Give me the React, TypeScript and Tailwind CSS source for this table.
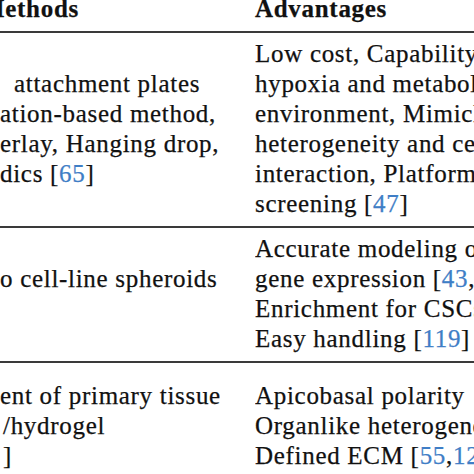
import type { ReactNode } from "react";

type Line = { text: ReactNode; className?: string };

function Ref({ children }: { children: ReactNode }) {
  return <span className="text-[#3f7ec6] [-webkit-text-stroke:0.25px_#3f7ec6]">{children}</span>;
}

function Rule() {
  return <div className="h-[2px] w-full bg-[#3a3a3a]" />;
}

function Row({
  left,
  right,
  className,
  leftClassName,
}: {
  left: Line[];
  right: Line[];
  className: string;
  leftClassName: string;
}) {
  return (
    <div className={`flex ${className}`}>
      <div className={`w-[255px] shrink-0 overflow-hidden whitespace-nowrap ${leftClassName}`}>
        {left.map((l, i) => (
          <div key={i} className={l.className}>
            {l.text}
          </div>
        ))}
      </div>
      <div className="min-w-0 flex-1 overflow-hidden whitespace-nowrap">
        {right.map((l, i) => (
          <div key={i}>{l.text}</div>
        ))}
      </div>
    </div>
  );
}

export default function App() {
  return (
    <div className="h-[474px] w-[474px] overflow-hidden bg-white font-['Liberation_Serif','Times_New_Roman',serif] text-[25px] leading-[30px] tracking-[0.7px] text-[#111111] [-webkit-text-stroke:0.25px_#111111]">
      <div className="mt-[-6px] flex pb-[7px] font-bold">
        <div className="w-[255px] shrink-0 overflow-hidden whitespace-nowrap">
          <span className="ml-[-19px] inline-block">Methods</span>
        </div>
        <div className="whitespace-nowrap">Advantages</div>
      </div>
      <Rule />

      <Row
        className="pt-[6px] pb-[7px]"
        leftClassName="pt-[30px]"
        left={[
          { text: "attachment plates", className: "pl-[14px]" },
          { text: "ation-based method," },
          { text: "erlay, Hanging drop," },
          {
            text: (
              <>
                dics [<Ref>65</Ref>]
              </>
            ),
          },
        ]}
        right={[
          { text: "Low cost, Capability of" },
          { text: "hypoxia and metabolic" },
          { text: "environment, Mimicking" },
          { text: "heterogeneity and cell-cell" },
          { text: "interaction, Platform for" },
          {
            text: (
              <>
                screening [<Ref>47</Ref>]
              </>
            ),
          },
        ]}
      />
      <Rule />

      <Row
        className="pt-[6px] pb-[7px]"
        leftClassName="pt-[30px]"
        left={[{ text: "o cell-line spheroids" }]}
        right={[
          { text: "Accurate modeling of" },
          {
            text: (
              <>
                gene expression [<Ref>43</Ref>,<Ref>118</Ref>]
              </>
            ),
          },
          { text: "Enrichment for CSCs" },
          {
            text: (
              <>
                Easy handling [<Ref>119</Ref>]
              </>
            ),
          },
        ]}
      />
      <Rule />

      <Row
        className="pt-[18px]"
        leftClassName=""
        left={[
          { text: "ent of primary tissue" },
          { text: "/hydrogel", className: "pl-[3px]" },
          { text: "]", className: "pl-[3px]" },
        ]}
        right={[
          { text: "Apicobasal polarity" },
          { text: "Organlike heterogeneity" },
          {
            text: (
              <>
                Defined ECM [<Ref>55</Ref>,<Ref>120</Ref>]
              </>
            ),
          },
        ]}
      />
    </div>
  );
}
